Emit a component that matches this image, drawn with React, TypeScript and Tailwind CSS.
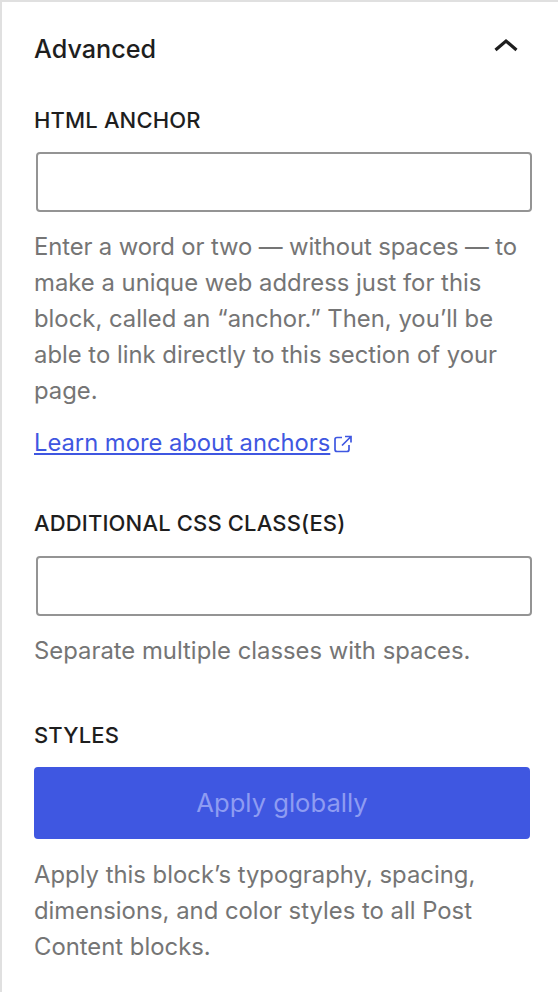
const font = "font-['Inter',sans-serif]";

const Label = ({ children, className = "" }: { children: string; className?: string }) => (
  <div className={`text-[22px] leading-[32px] font-medium uppercase tracking-[0.15px] text-[#1e1e1e] ${className}`}>{children}</div>
);

const Help = ({ children, className = "" }: { children: React.ReactNode; className?: string }) => (
  <p className={`text-[23.85px] leading-[36px] text-[#757575] ${className}`}>{children}</p>
);

const TextBox = ({ className = "" }: { className?: string }) => (
  <input type="text" className={`block h-[60px] w-[496px] ml-[2px] rounded-[4px] border-2 border-[#949494] bg-white ${className}`} />
);

export default function App() {
  return (
    <div className={`h-[992px] w-[558px] overflow-hidden border-t-2 border-l-2 border-[#e0e0e0] bg-white pl-[32px] pr-[28px] ${font}`}>
      <div className="flex items-start justify-between pt-[29px]">
        <h2 className="text-[25.2px] leading-[36px] font-medium text-[#1e1e1e]">Advanced</h2>
        <svg viewBox="0 0 32 32" className="mr-[8px] -mt-[1px] h-[32px] w-[32px]" fill="none">
          <path d="M5.5 20 L16 11 L26.5 20" stroke="#1e1e1e" strokeWidth="3.2" />
        </svg>
      </div>

      <Label className="mt-[37px]">HTML Anchor</Label>
      <TextBox className="mt-[16px]" />
      <Help className="mt-[17px]">
        <span className="tracking-[-0.12px]">Enter a word or two — without spaces — to</span> make a unique web address
        just for this block, called an “anchor.” Then, you’ll be able to link directly to this section of your page.
      </Help>
      <div className="mt-[16px] flex items-center text-[23.75px] leading-[36px] text-[#3f57e1]">
        <a href="#" className="underline">Learn more about anchors</a>
        <svg viewBox="0 0 20 20" className="ml-[3px] mt-[1px] h-[20px] w-[20px]" fill="none" stroke="#3f57e1" strokeWidth="1.7">
          <path d="M9 3.5 H4 Q2 3.5 2 5.5 V15.5 Q2 17.5 4 17.5 H14 Q16 17.5 16 15.5 V11" />
          <path d="M12 2.5 H18 V8.5 M18 2.5 L9 11.5" />
        </svg>
      </div>

      <Label className="mt-[46px]">Additional CSS Class(es)</Label>
      <TextBox className="mt-[17px]" />
      <Help className="mt-[17px]">Separate multiple classes with spaces.</Help>

      <Label className="mt-[50px]">Styles</Label>
      <button className="mt-[16px] block h-[72px] w-[496px] rounded-[4px] bg-[#3f57e1] text-[25.6px] text-[#8e9cf2]">
        Apply globally
      </button>
      <Help className="mt-[18px]">
        Apply this block’s typography, spacing, dimensions, and color styles to all Post Content blocks.
      </Help>
    </div>
  );
}
